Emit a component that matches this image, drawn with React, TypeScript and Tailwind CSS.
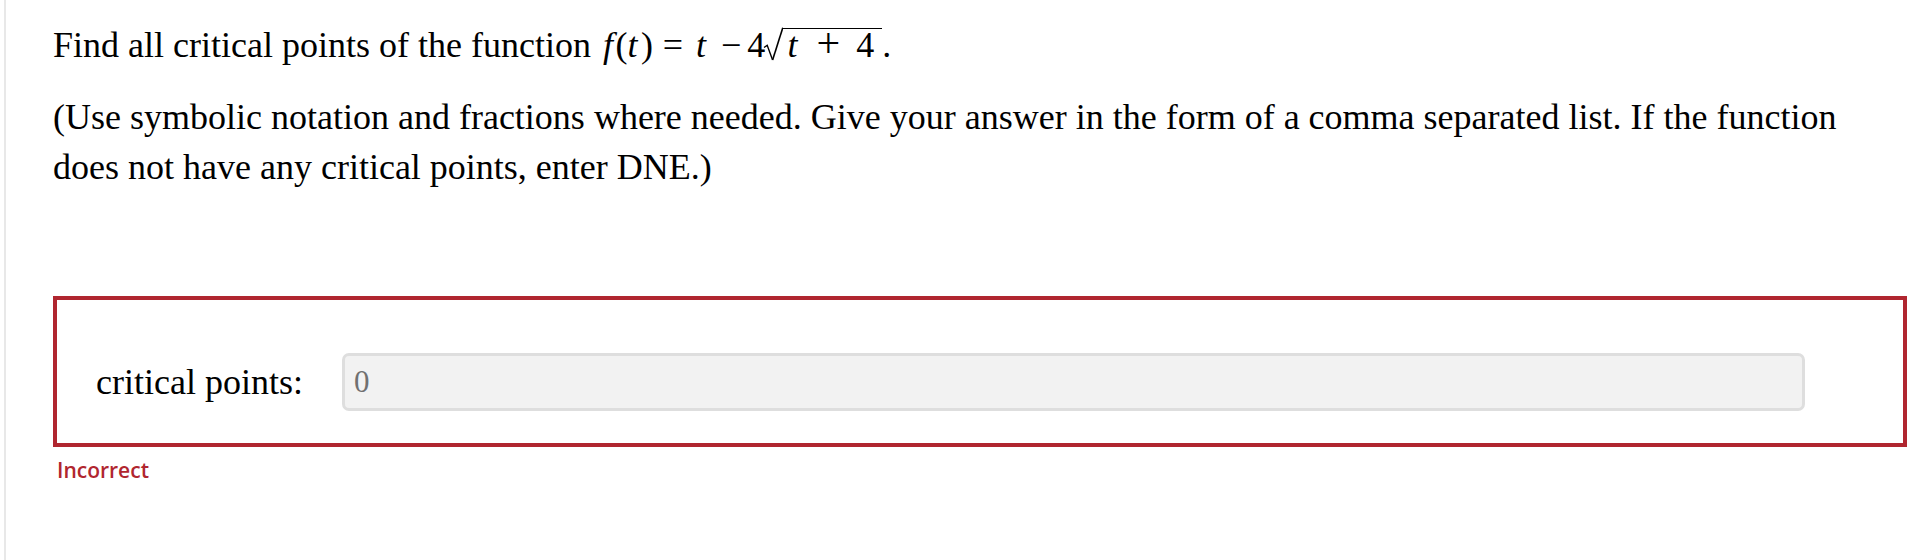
import React from "react"

// ─── Inline math: f(t) = t − 4√(t + 4) ───────────────────────────────────────

function Radical() {
  return (
    <svg
      width="20"
      height="34"
      viewBox="0 0 20 34"
      className="-ml-[2.3px] inline-block align-[-4px]"
      fill="none"
      stroke="currentColor"
    >
      <path d="M1 20.5 L4.2 18.3 L9.6 33" strokeWidth="1.4" strokeLinejoin="miter" />
      <path d="M9.6 33 L19.8 0.8" strokeWidth="1.6" />
    </svg>
  )
}

function Formula() {
  return (
    <span className="whitespace-nowrap">
      <i className="ml-[3px]">f</i>
      <span className="ml-[2.5px]">(</span>
      <i>t</i>
      <span className="ml-[3.5px]">)</span>
      <span className="ml-[9.8px]">=</span>
      <i className="ml-[13px]">t</i>
      <span className="ml-[15px]">−</span>
      <span className="ml-[6px]">4</span>
      <Radical />
      <span className="inline-block border-t-[1.5px] border-black pr-[8px] leading-[33.6px]">
        <i className="ml-[4.5px]">t</i>
        <span className="ml-[19px] text-[42px] leading-[28px]">+</span>
        <span className="ml-[16px]">4</span>
      </span>
      .
    </span>
  )
}

// ─── Page ────────────────────────────────────────────────────────────────────

export default function App() {
  return (
    <div className="h-screen bg-white">
      <div className="ml-[4px] h-full border-l-2 border-[#e8e8e8] pl-[47px] pr-[9px] pt-[20px] font-['Liberation_Serif','Times_New_Roman',serif] text-black">
        <p className="text-[36px] leading-[50px]">
          Find all critical points of the function <Formula />
        </p>

        <p className="mt-[22px] text-[36px] leading-[50px]">
          (Use symbolic notation and fractions where needed. Give your answer in the form of a comma
          separated list. If the function does not have any critical points, enter DNE.)
        </p>

        {/* Answer box */}
        <div className="mt-[104px] flex items-center border-4 border-[#b0262f] pl-[39px] pr-[98px] pt-[53px] pb-[32px]">
          <label className="text-[36px] leading-[50px] whitespace-nowrap">critical points:</label>
          <input
            readOnly
            value="0"
            className="ml-[39px] h-[58px] flex-1 rounded-[7px] border-[3px] border-[#dedede] bg-[#f2f2f2] pl-[9px] font-['Liberation_Serif','Times_New_Roman',serif] text-[31px] text-[#707070] outline-none"
          />
        </div>

        <div className="mt-[9px] pl-[4px] font-['Open_Sans',sans-serif] text-[21px] font-semibold leading-[28px] text-[#b1262f]">
          Incorrect
        </div>
      </div>
    </div>
  )
}
